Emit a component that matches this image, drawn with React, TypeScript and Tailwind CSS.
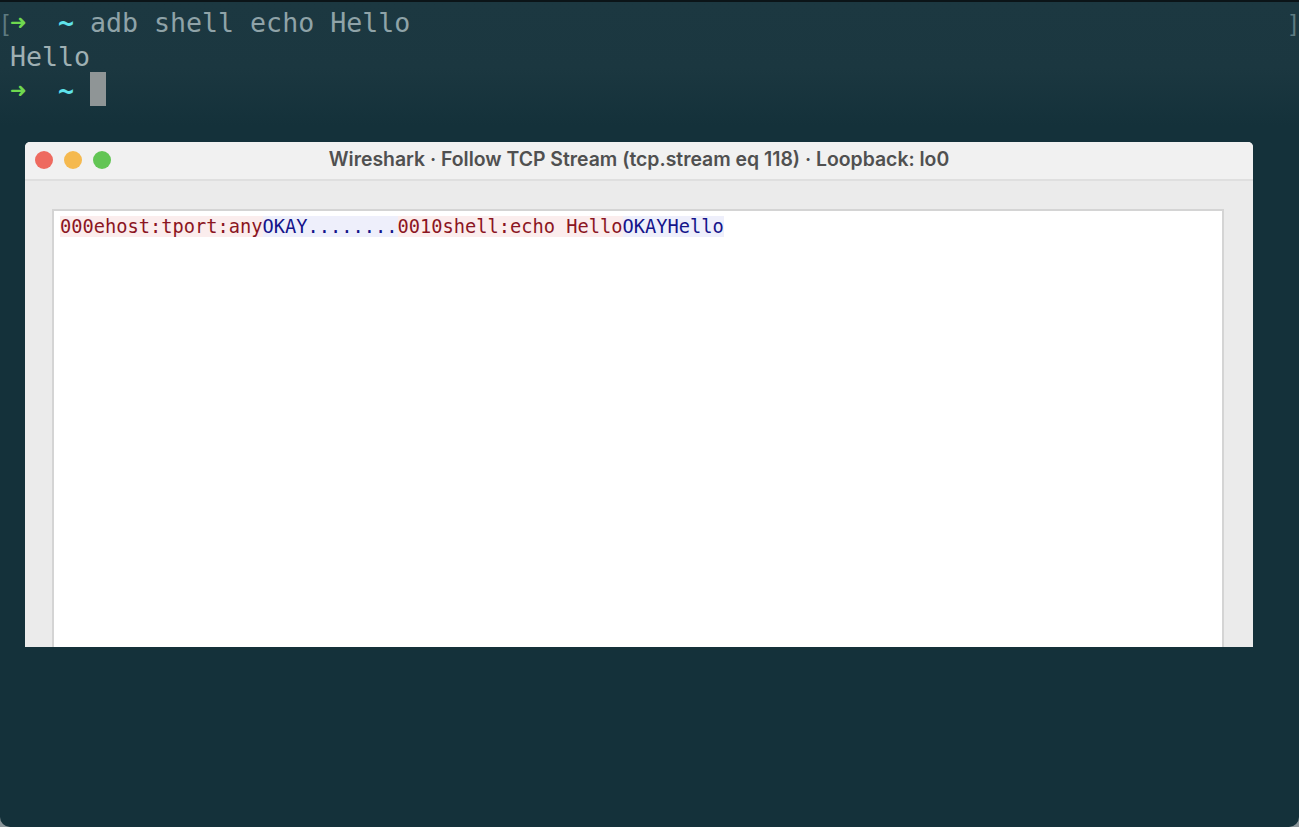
const mono = "font-['DejaVu_Sans_Mono',monospace]";
const bracket = "absolute top-[4px] font-['Liberation_Sans',sans-serif] text-[24px] font-light text-[#5d7a80]";

function Prompt() {
  return (
    <>
      <span className="w-[48px] text-[27px] font-bold text-[#6fd84f]">➜</span>
      <span className="w-[32px] text-[26.6px] font-bold text-[#5fe3ec]">~</span>
    </>
  );
}

export default function App() {
  return (
    <div className="h-[827px] w-[1299px] overflow-hidden bg-[#8b9599]">
      <div className={`h-full overflow-hidden rounded-b-[10px] border-t-2 border-[#0b1418] bg-gradient-to-b from-[#1c3841] via-[#1b3740] via-[8%] to-[#14313a] to-[15%] ${mono}`}>
        <div className="relative pl-[10px] pt-[4px] text-[26.6px] leading-[34px] text-[#8fa3a8]">
          <span className={`${bracket} left-[2px]`}>[</span>
          <span className={`${bracket} right-[2px]`}>]</span>
          <div className="flex h-[34px] items-center">
            <Prompt />
            <span>adb shell echo Hello</span>
          </div>
          <div className="h-[34px] text-[#9fb0b3]">Hello</div>
          <div className="flex h-[34px] items-center">
            <Prompt />
            <span className="mt-[-4px] h-[34px] w-[16px] bg-[#8f9596]" />
          </div>
        </div>

        <div className="mx-[25px] mt-[34px] flex h-[505px] w-[1228px] flex-col rounded-t-[5px] bg-[#ebebeb]">
          <div className="relative flex h-[39px] shrink-0 items-center justify-center rounded-t-[5px] border-b-2 border-[#dfdfdf] bg-[#f1f1f1] pb-[1px] font-['Inter',sans-serif] text-[19.4px] font-semibold text-[#505050]">
            <div className="absolute left-[10px] top-[9px] flex gap-[11px]">
              <span className="h-[18px] w-[18px] rounded-full bg-[#ee6a5f]" />
              <span className="h-[18px] w-[18px] rounded-full bg-[#f5b94f]" />
              <span className="h-[18px] w-[18px] rounded-full bg-[#62c554]" />
            </div>
            Wireshark · Follow TCP Stream (tcp.stream eq 118) · Loopback: lo0
          </div>
          <div className="min-h-0 flex-1 px-[27px] pt-[28px]">
            <div className="h-full w-[1172px] border-x-2 border-t-2 border-[#d4d4d4] bg-white pl-[6px] pt-[4px] text-[18.7px] leading-[24px]">
              <span className="bg-[#fbeded] text-[#8b1522]">000ehost:tport:any</span>
              <span className="bg-[#eeeffb] text-[#14148a]">OKAY........</span>
              <span className="bg-[#fbeded] text-[#8b1522]">0010shell:echo Hello</span>
              <span className="bg-[#eeeffb] text-[#14148a]">OKAYHello</span>
            </div>
          </div>
        </div>
      </div>
    </div>
  );
}
